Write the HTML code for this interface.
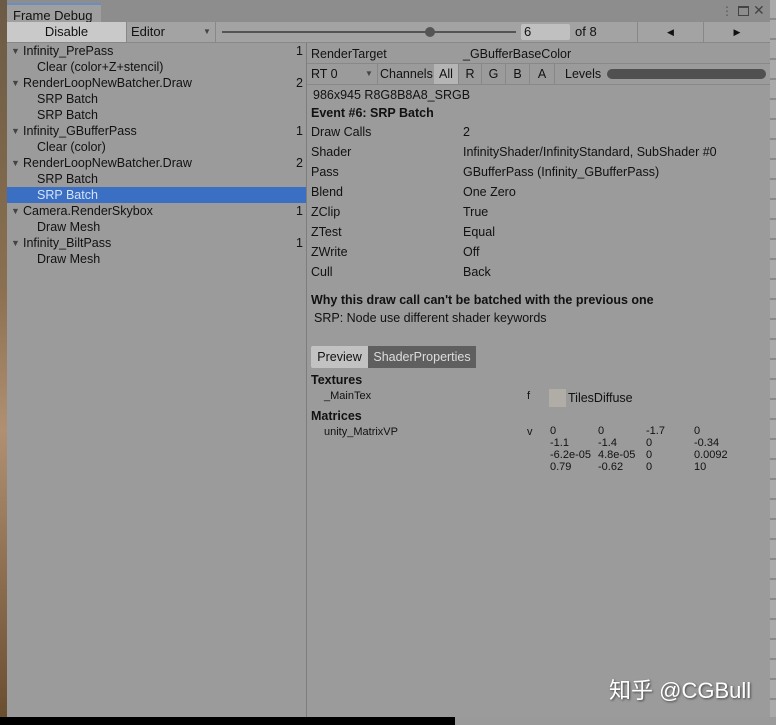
<!DOCTYPE html><html><head><style>
*{margin:0;padding:0;box-sizing:border-box}
body{width:776px;height:725px;background:#000;position:relative;overflow:hidden;font-family:"Liberation Sans","DejaVu Sans",sans-serif;font-size:12px;color:#111}
.a{position:absolute;white-space:nowrap}
.t div{height:16px;line-height:16px;overflow:hidden}
.tr{display:inline-block;width:12px;font-size:9px;color:#444;line-height:16px;vertical-align:top}
</style></head><body>
<div class="a" style="left:0;top:0;width:7px;height:717px;background:linear-gradient(#6b5a45,#8a7050 40%,#b09070 60%,#6a4e30)"></div>
<div class="a" style="left:455px;top:717px;width:321px;height:8px;background:#9a9a9a"></div>
<div class="a" style="left:770px;top:0;width:6px;height:717px;background:repeating-linear-gradient(#aaa 0 18px,#8a8a8a 18px 20px)"></div>
<div class="a" style="left:7px;top:0;width:763px;height:717px;background:#9b9b9b"></div>
<div class="a" style="left:7px;top:0;width:763px;height:22px;background:#8d8d8d"></div>
<div class="a" style="left:7px;top:3px;width:94px;height:19px;background:#9f9f9f;border-top:2px solid #6a8ec0;font-size:13px;padding:3px 0 0 6px">Frame Debug</div>
<div class="a" style="left:721px;top:4px;font-size:12px;color:#555">⋮</div>
<div class="a" style="left:738px;top:6px;width:11px;height:10px;border:1px solid #444;border-top-width:2px"></div>
<div class="a" style="left:753px;top:2px;font-size:14px;color:#444">✕</div>
<div class="a" style="left:7px;top:22px;width:763px;height:21px;background:#a3a3a3;border-bottom:1px solid #888"></div>
<div class="a" style="left:7px;top:22px;width:119px;height:20px;background:#c9c9c9;text-align:center;line-height:20px;font-size:13px">Disable</div>
<div class="a" style="left:126px;top:22px;width:90px;height:20px;border-right:1px solid #888;border-left:1px solid #888;padding-left:4px;line-height:20px;font-size:13px">Editor<span style="position:absolute;left:76px;font-size:8px;color:#444">▼</span></div>
<div class="a" style="left:222px;top:31px;width:294px;height:2px;background:#555"></div>
<div class="a" style="left:425px;top:27px;width:10px;height:10px;border-radius:50%;background:#555"></div>
<div class="a" style="left:521px;top:24px;width:49px;height:16px;background:#c0c0c0;border-radius:2px;padding-left:3px;line-height:16px;font-size:13px">6</div>
<div class="a" style="left:575px;top:22px;line-height:20px;font-size:13px">of 8</div>
<div class="a" style="left:637px;top:22px;width:67px;height:20px;border-left:1px solid #888;border-right:1px solid #888;text-align:center;line-height:20px;font-size:9px">◀</div>
<div class="a" style="left:704px;top:22px;width:66px;height:20px;text-align:center;line-height:20px;font-size:9px">▶</div>
<div class="a" style="left:306px;top:43px;width:1px;height:674px;background:#7d7d7d"></div>
<div class="a" style="left:7px;top:187px;width:299px;height:16px;background:#3a6fc4"></div>
<div class="a t" style="left:11px;top:43px;font-size:12.5px">
<div><span class="tr">▼</span>Infinity_PrePass</div>
<div style="padding-left:26px">Clear (color+Z+stencil)</div>
<div><span class="tr">▼</span>RenderLoopNewBatcher.Draw</div>
<div style="padding-left:26px">SRP Batch</div>
<div style="padding-left:26px">SRP Batch</div>
<div><span class="tr">▼</span>Infinity_GBufferPass</div>
<div style="padding-left:26px">Clear (color)</div>
<div><span class="tr">▼</span>RenderLoopNewBatcher.Draw</div>
<div style="padding-left:26px">SRP Batch</div>
<div style="padding-left:26px;color:#d6e2f6">SRP Batch</div>
<div><span class="tr">▼</span>Camera.RenderSkybox</div>
<div style="padding-left:26px">Draw Mesh</div>
<div><span class="tr">▼</span>Infinity_BiltPass</div>
<div style="padding-left:26px">Draw Mesh</div>
</div>
<div class="a t" style="left:296px;top:43px;font-size:12.5px"><div>1</div><div></div><div>2</div><div></div><div></div><div>1</div><div></div><div>2</div><div></div><div></div><div>1</div><div></div><div>1</div></div>
<div class="a" style="left:311px;top:46px;line-height:16px;font-size:12.5px">RenderTarget</div>
<div class="a" style="left:463px;top:46px;line-height:16px;font-size:12.5px">_GBufferBaseColor</div>
<div class="a" style="left:307px;top:63px;width:463px;height:22px;border-top:1px solid #888;border-bottom:1px solid #888"></div>
<div class="a" style="left:311px;top:64px;line-height:20px;font-size:12.5px">RT 0</div>
<div class="a" style="left:365px;top:64px;line-height:20px;font-size:8px;color:#444">▼</div>
<div class="a" style="left:377px;top:64px;width:1px;height:20px;background:#888"></div>
<div class="a" style="left:380px;top:64px;line-height:20px;font-size:12.5px">Channels</div>
<div class="a" style="left:434px;top:64px;width:24px;height:20px;background:#b5b5b5;text-align:center;line-height:20px;font-size:12.5px">All</div>
<div class="a" style="left:458px;top:64px;width:120px;height:20px;display:flex;font-size:12.5px;line-height:20px">
<div style="width:24px;text-align:center;border-right:1px solid #888;border-left:1px solid #888">R</div><div style="width:24px;text-align:center;border-right:1px solid #888">G</div><div style="width:24px;text-align:center;border-right:1px solid #888">B</div><div style="width:25px;text-align:center;border-right:1px solid #888">A</div></div>
<div class="a" style="left:565px;top:64px;line-height:20px;font-size:12.5px">Levels</div>
<div class="a" style="left:607px;top:69px;width:159px;height:10px;background:#505050;border-radius:5px"></div>
<div class="a" style="left:313px;top:87px;line-height:16px;font-size:12.5px">986x945 R8G8B8A8_SRGB</div>
<div class="a" style="left:311px;top:105px;line-height:16px;font-size:12.5px;font-weight:bold">Event #6: SRP Batch</div>
<div class="a" style="left:311px;top:122px;line-height:20px;font-size:12.5px">Draw Calls<br>Shader<br>Pass<br>Blend<br>ZClip<br>ZTest<br>ZWrite<br>Cull</div>
<div class="a" style="left:463px;top:122px;line-height:20px;font-size:12.5px">2<br>InfinityShader/InfinityStandard, SubShader #0<br>GBufferPass (Infinity_GBufferPass)<br>One Zero<br>True<br>Equal<br>Off<br>Back</div>
<div class="a" style="left:311px;top:292px;line-height:16px;font-size:12.5px;font-weight:bold">Why this draw call can't be batched with the previous one</div>
<div class="a" style="left:314px;top:310px;line-height:16px;font-size:12.5px">SRP: Node use different shader keywords</div>
<div class="a" style="left:311px;top:346px;width:57px;height:22px;background:#c2c2c2;border-radius:2px 0 0 2px;text-align:center;line-height:22px;font-size:12.5px">Preview</div>
<div class="a" style="left:368px;top:346px;width:108px;height:22px;background:#5f5f5f;color:#ddd;text-align:center;line-height:22px;font-size:12.5px">ShaderProperties</div>
<div class="a" style="left:311px;top:372px;line-height:16px;font-size:12.5px;font-weight:bold">Textures</div>
<div class="a" style="left:324px;top:389px;line-height:14px;font-size:11px">_MainTex</div>
<div class="a" style="left:527px;top:389px;line-height:14px;font-size:11px">f</div>
<div class="a" style="left:549px;top:389px;width:17px;height:18px;background:#b0aca6"></div>
<div class="a" style="left:568px;top:390px;line-height:16px;font-size:12.5px">TilesDiffuse</div>
<div class="a" style="left:311px;top:408px;line-height:16px;font-size:12.5px;font-weight:bold">Matrices</div>
<div class="a" style="left:324px;top:425px;line-height:14px;font-size:11px">unity_MatrixVP</div>
<div class="a" style="left:527px;top:425px;line-height:14px;font-size:11px">v</div>
<div class="a" style="left:550px;top:425px;line-height:12px;font-size:11px">0<br>-1.1<br>-6.2e-05<br>0.79</div>
<div class="a" style="left:598px;top:425px;line-height:12px;font-size:11px">0<br>-1.4<br>4.8e-05<br>-0.62</div>
<div class="a" style="left:646px;top:425px;line-height:12px;font-size:11px">-1.7<br>0<br>0<br>0</div>
<div class="a" style="left:694px;top:425px;line-height:12px;font-size:11px">0<br>-0.34<br>0.0092<br>10</div>
<div class="a" style="left:609px;top:676px;line-height:30px;font-size:22px;color:#fff;text-shadow:1px 1px 2px #444;font-family:'Liberation Sans','Noto Sans CJK SC',sans-serif">知乎 @CGBull</div>
</body></html>
